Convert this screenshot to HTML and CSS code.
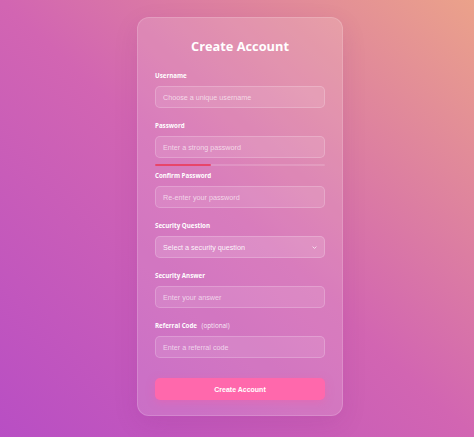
FILE: index.html
```html
<!DOCTYPE html>
<html lang="en">
<head>
    <meta charset="UTF-8">
    <meta name="viewport" content="width=device-width, initial-scale=1.0">
    <title>Create Account</title>
    <link rel="stylesheet" href="styles.css">
</head>
<body>
    <div class="signup-card">
        <h1 class="signup-title">Create Account</h1>

        <form class="signup-form" id="signupForm">
            <div class="form-group">
                <label class="form-label" for="username">Username</label>
                <input type="text" id="username" class="form-input" placeholder="Choose a unique username">
            </div>

            <div class="form-group">
                <label class="form-label" for="password">Password</label>
                <input type="password" id="password" class="form-input" placeholder="Enter a strong password">
                <div class="strength-meter"><div class="strength-fill"></div></div>
            </div>

            <div class="form-group">
                <label class="form-label" for="confirmPassword">Confirm Password</label>
                <input type="password" id="confirmPassword" class="form-input" placeholder="Re-enter your password">
            </div>

            <div class="form-group">
                <label class="form-label" for="question">Security Question</label>
                <div class="select-wrap">
                    <select id="question" class="form-input form-select">
                        <option>Select a security question</option>
                        <option>What was the name of your first pet?</option>
                        <option>In what city were you born?</option>
                    </select>
                    <svg class="select-arrow" viewBox="0 0 8 8" width="5" height="5">
                        <path d="M1.5 3 L4 5.5 L6.5 3" fill="none" stroke="currentColor" stroke-width="1.4" stroke-linecap="round"/>
                    </svg>
                </div>
            </div>

            <div class="form-group">
                <label class="form-label" for="answer">Security Answer</label>
                <input type="text" id="answer" class="form-input" placeholder="Enter your answer">
            </div>

            <div class="form-group">
                <label class="form-label" for="referral">Referral Code <span class="optional">(optional)</span></label>
                <input type="text" id="referral" class="form-input" placeholder="Enter a referral code">
            </div>

            <button type="submit" class="signup-button">Create Account</button>
        </form>
    </div>
</body>
</html>
```

FILE: styles.css
```css
* {
    margin: 0;
    padding: 0;
    box-sizing: border-box;
}

body {
    font-family: 'Open Sans', 'Noto Sans', 'Liberation Sans', sans-serif;
    background: linear-gradient(to top right, #b84ec4 0%, #d265b2 50%, #eba28a 100%);
    min-height: 100vh;
    display: flex;
    justify-content: center;
    align-items: flex-start;
    padding: 17px 0 0 6px;
}

.signup-card {
    width: 206px;
    background: rgba(255, 255, 255, 0.15);
    border: 1px solid rgba(255, 255, 255, 0.16);
    border-radius: 12px;
    box-shadow: 0 8px 24px rgba(120, 30, 120, 0.12);
    padding: 19px 17px 15px;
}

.signup-title {
    color: white;
    font-size: 12.8px;
    line-height: 18px;
    font-weight: 700;
    text-align: center;
    margin-bottom: 16px;
}

.signup-form {
    display: flex;
    flex-direction: column;
    gap: 13px;
}

.form-group {
    display: flex;
    flex-direction: column;
}

.form-label {
    display: block;
    color: white;
    font-size: 6.2px;
    line-height: 9px;
    font-weight: 700;
    margin-bottom: 6px;
}

.optional {
    font-weight: 400;
    font-size: 6.3px;
    opacity: 0.85;
    margin-left: 3px;
}

.form-input {
    display: block;
    width: 100%;
    height: 22px;
    padding: 0 7px;
    background: rgba(255, 255, 255, 0.1);
    border: 1px solid rgba(255, 255, 255, 0.2);
    border-radius: 5px;
    color: white;
    font-family: 'Liberation Sans', Arial, sans-serif;
    font-size: 7.2px;
    outline: none;
}

.form-input::placeholder {
    color: rgba(255, 255, 255, 0.65);
}

.select-wrap {
    position: relative;
}

.form-select {
    appearance: none;
    background: rgba(255, 255, 255, 0.14);
    color: rgba(255, 255, 255, 0.92);
}

.form-select option {
    color: #333;
}

.select-arrow {
    position: absolute;
    right: 8px;
    top: 9px;
    color: rgba(255, 255, 255, 0.8);
    pointer-events: none;
}

.strength-meter {
    height: 2px;
    margin-top: 6px;
    margin-bottom: -8px;
    background: rgba(255, 255, 255, 0.15);
    border-radius: 1px;
}

.strength-fill {
    width: 33%;
    height: 100%;
    background: #e8456a;
    border-radius: 1px;
}

.signup-button {
    margin-top: 7px;
    height: 22px;
    background: #ff68ac;
    color: white;
    border: none;
    border-radius: 5px;
    font-family: 'Liberation Sans', Arial, sans-serif;
    font-size: 7px;
    font-weight: 700;
    box-shadow: 0 2px 8px rgba(255, 90, 160, 0.35);
    cursor: pointer;
}
```
